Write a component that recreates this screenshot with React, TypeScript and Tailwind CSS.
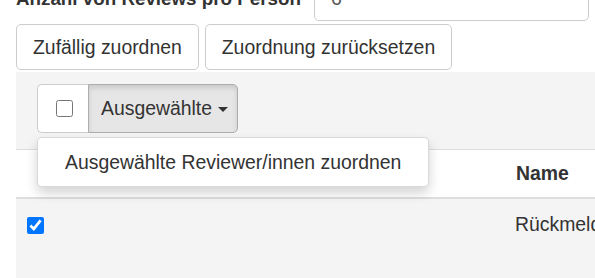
export default function App() {
  return (
    <div className="h-[278px] w-full overflow-hidden bg-white pl-4 text-[19.4px] leading-[27px] text-[#333] font-['Liberation_Sans',Arial,sans-serif]">
      {/* Reviews pro Person */}
      <div className="-mt-[25px] flex h-[46px] items-center">
        <label className="w-[288px] shrink-0 whitespace-nowrap text-[18.8px] font-bold">Anzahl von Reviews pro Person</label>
        <input
          readOnly
          value="6"
          className="ml-[10px] h-[46px] w-[275px] rounded-[5px] border border-[#ccc] px-[16px] text-[#555] outline-none"
        />
      </div>

      <div className="mt-[3px] flex gap-[6px]">
        <button className="h-[46px] rounded-[5px] border border-[#ccc] bg-white px-[16px] whitespace-nowrap">
          Zufällig zuordnen
        </button>
        <button className="h-[46px] rounded-[5px] border border-[#ccc] bg-white px-[16px] whitespace-nowrap">
          Zuordnung zurücksetzen
        </button>
      </div>

      <div className="mt-[2px] w-[1200px] bg-[#f4f4f4]">
        {/* toolbar */}
        <div className="px-[21px] pt-[12px] pb-[16px]">
          <div className="relative inline-flex h-[49px]">
            <div className="flex w-[51px] items-center justify-center rounded-l-[5px] border-y border-l border-[#ccc] bg-white">
              <input type="checkbox" className="ml-[2px] h-[17px] w-[17px]" />
            </div>
            <button className="flex w-[150px] items-center rounded-r-[5px] border border-[#adadad] bg-[#e6e6e6] pl-[12px] shadow-[inset_0_3px_5px_rgba(0,0,0,0.125)]">
              Ausgewählte
              <span className="ml-[6px] mt-[2px] h-0 w-0 border-x-[5px] border-t-[5px] border-x-transparent border-t-[#333]" />
            </button>
            <div className="absolute left-0 top-[53px] z-10 whitespace-nowrap rounded-[5px] border border-[rgba(0,0,0,0.15)] bg-white pt-[7px] pb-[6px] shadow-[0_6px_12px_rgba(0,0,0,0.175)]">
              <div className="px-[27px] py-[4px]">Ausgewählte Reviewer/innen zuordnen</div>
            </div>
          </div>
        </div>

        {/* table */}
        <div className="flex h-[50px] items-center border-t border-b-2 border-[#ddd] bg-white font-bold">
          <div className="w-[489px]" />
          <div className="px-[11px]">Name</div>
        </div>
        <div className="flex h-[90px] items-start pt-[11px]">
          <div className="w-[489px] pl-[11px]">
            <input type="checkbox" defaultChecked className="mt-[7px] block h-[17px] w-[17px]" />
          </div>
          <div className="px-[10px] pt-[1px]">Rückmeldung</div>
        </div>
      </div>
    </div>
  )
}
